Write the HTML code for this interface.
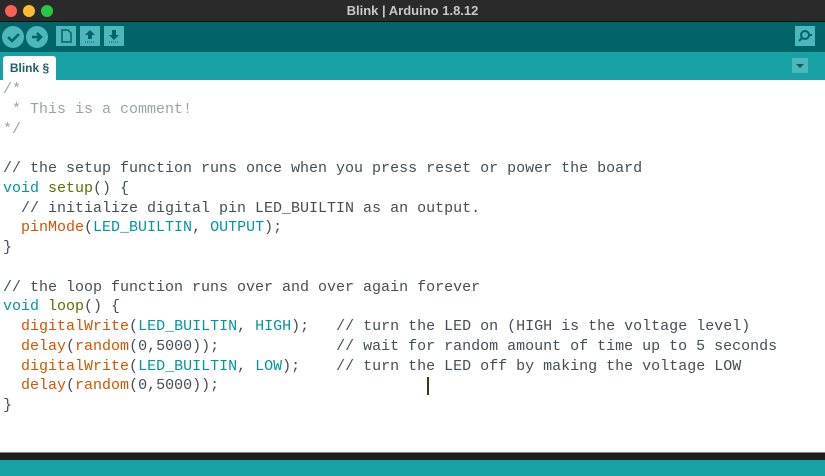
<!DOCTYPE html><html><head><style>
*{margin:0;padding:0;box-sizing:border-box}
body{width:825px;height:476px;overflow:hidden;background:#fff;position:relative;font-family:"Liberation Sans",sans-serif}
#title{position:absolute;top:0;left:0;width:825px;height:22px;background:#2b2a2a;border-bottom:1px solid #111;color:#c8c8c8;font-size:13px;font-weight:bold;text-align:center;line-height:21px}
.dot{position:absolute;top:5px;width:12px;height:12px;border-radius:50%}
#tb{position:absolute;top:22px;left:0;width:825px;height:30px;background:#006468}
.rb{position:absolute;top:4px;width:22px;height:22px;border-radius:50%;background:#4db7bb}
.sb{position:absolute;top:4px;width:20px;height:20px;background:#4db7bb}
#tabs{position:absolute;top:52px;left:0;width:825px;height:28px;background:#17a1a5}
#tab{position:absolute;left:3px;top:4px;width:53px;height:24px;background:#fff;border-radius:3px 3px 0 0;color:#1d6366;font-size:12px;font-weight:bold;text-align:center;line-height:24px}
#code{position:absolute;top:80px;left:3px;font-family:"Liberation Mono",monospace;font-size:15px;line-height:19.75px;white-space:pre;color:#434f54}
.c1{color:#95a5a6}.k{color:#00979c}.f{color:#d35400}.s{color:#5e6d03}
#bot1{position:absolute;top:452px;left:0;width:825px;height:8px;background:#1f1f1f;border-top:1px solid #888}
#bot2{position:absolute;top:460px;left:0;width:825px;height:16px;background:#17a1a5}
</style></head><body>
<div id="title">Blink | Arduino 1.8.12</div>
<div class="dot" style="left:5px;background:#fe5f57"></div>
<div class="dot" style="left:23px;background:#febc2e"></div>
<div class="dot" style="left:41px;background:#28c840"></div>
<div id="tb">
<div class="rb" style="left:2px"><svg width="22" height="22"><path d="M6 11l4 4 7-7" stroke="#006468" stroke-width="2.5" fill="none"/></svg></div>
<div class="rb" style="left:26px"><svg width="22" height="22"><path d="M6 11h8M11 7l4 4-4 4" stroke="#006468" stroke-width="2.5" fill="none"/></svg></div>
<div class="sb" style="left:56px"><svg width="20" height="20"><path d="M6 4h6l3 3v9H6z" stroke="#006468" stroke-width="1.5" fill="none"/></svg></div>
<div class="sb" style="left:80px"><svg width="20" height="20"><path d="M10 4l-5 5h3v4h4V9h3z" fill="#006468"/><path d="M5 16h10" stroke="#006468" stroke-dasharray="1 1"/></svg></div>
<div class="sb" style="left:104px"><svg width="20" height="20"><path d="M10 14l-5-5h3V4h4v5h3z" fill="#006468"/><path d="M5 16h10" stroke="#006468" stroke-dasharray="1 1"/></svg></div>
<div class="sb" style="left:795px"><svg width="20" height="20"><circle cx="10" cy="9" r="4" stroke="#006468" stroke-width="2" fill="none"/><path d="M7 12l-3 3M14 9h3" stroke="#006468" stroke-width="2"/></svg></div>
</div>
<div id="tabs"><div id="tab">Blink §</div>
<div style="position:absolute;left:792px;top:6px;width:16px;height:15px;background:#4db7bb"><svg width="16" height="15"><path d="M4 6h8l-4 4z" fill="#0b5c60"/></svg></div></div>
<div id="code"><span class="c1">/*
 * This is a comment!
*/</span>

// the setup function runs once when you press reset or power the board
<span class="k">void</span> <span class="s">setup</span>() {
  // initialize digital pin LED_BUILTIN as an output.
  <span class="f">pinMode</span>(<span class="k">LED_BUILTIN</span>, <span class="k">OUTPUT</span>);
}

// the loop function runs over and over again forever
<span class="k">void</span> <span class="s">loop</span>() {
  <span class="f">digitalWrite</span>(<span class="k">LED_BUILTIN</span>, <span class="k">HIGH</span>);   // turn the LED on (HIGH is the voltage level)
  <span class="f">delay</span>(<span class="f">random</span>(0,5000));             // wait for random amount of time up to 5 seconds
  <span class="f">digitalWrite</span>(<span class="k">LED_BUILTIN</span>, <span class="k">LOW</span>);    // turn the LED off by making the voltage LOW
  <span class="f">delay</span>(<span class="f">random</span>(0,5000));
}</div>
<div style="position:absolute;left:427px;top:377px;width:2px;height:18px;background:#3a3a10"></div>
<div id="bot1"></div><div id="bot2"></div>
</body></html>
